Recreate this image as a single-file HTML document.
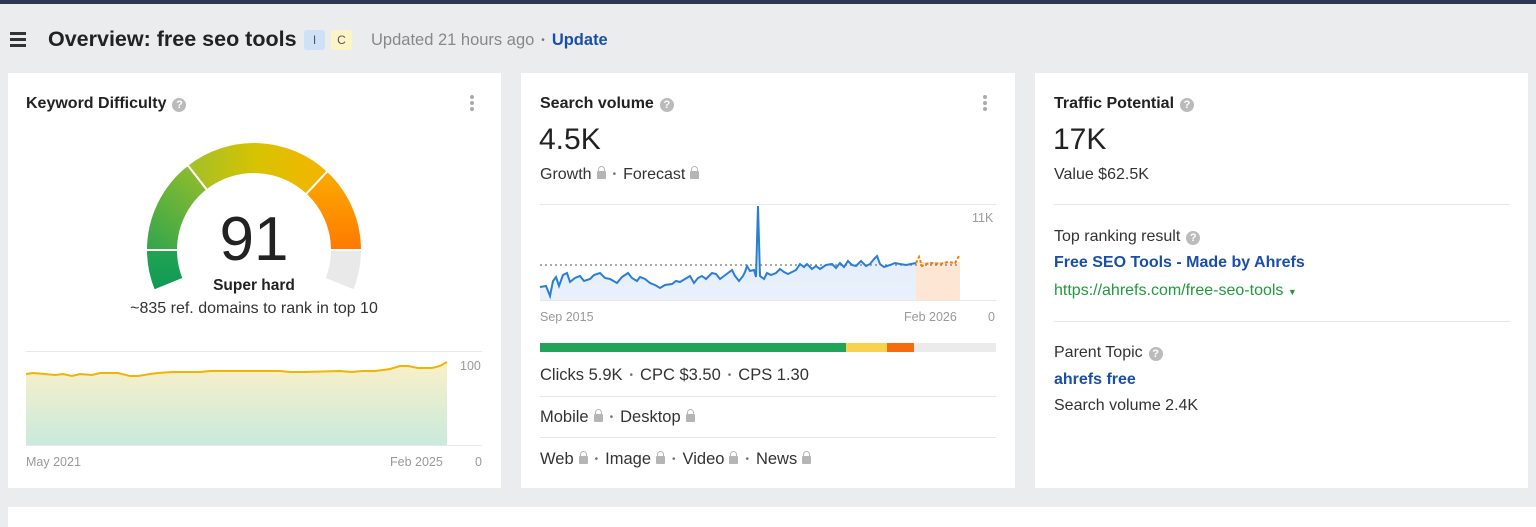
<!DOCTYPE html>
<html><head><meta charset="utf-8"><style>
*{margin:0;padding:0;box-sizing:border-box}
body{width:1536px;height:518px;overflow:hidden;background:#ebecee;font-family:"Liberation Sans",Arial,sans-serif;color:#333;position:relative}
.a{position:absolute;white-space:nowrap;line-height:1.2}
.card{position:absolute;background:#fff}
.t{font-weight:bold;font-size:16px;color:#222}
.q{display:inline-block;width:14px;height:14px;border-radius:50%;background:#bbb;color:#fff;font-size:11px;text-align:center;line-height:14px;font-weight:bold;vertical-align:0px;margin-left:6px}
.lk{display:inline-block;width:9px;height:8px;background:#b5b5b5;border-radius:1px;position:relative;margin-left:5px;vertical-align:0}
.lk:before{content:"";position:absolute;left:1px;top:-5px;width:7px;height:7px;border:1.6px solid #b5b5b5;border-radius:4px 4px 0 0;box-sizing:border-box;border-bottom:none}
.dot{color:#777;margin:0 7px;font-size:10px;vertical-align:2px}
.hl{position:absolute;height:1px;background:#e6e6e6}
.g{color:#999;font-size:12.5px}
.dots{position:absolute;width:4px}
.dots i{display:block;width:4px;height:4px;border-radius:50%;background:#aaa;margin-bottom:2px}
</style></head><body>
<div style="position:absolute;left:0;top:0;width:1536px;height:4px;background:#2c3850"></div>
<div style="position:absolute;left:10px;top:32px;width:16px">
<div style="height:2.5px;background:#333;margin-bottom:3.5px"></div><div style="height:2.5px;background:#333;margin-bottom:3.5px"></div><div style="height:2.5px;background:#333"></div></div>
<div class="a" style="left:48px;top:27px;font-size:21.5px;font-weight:bold;color:#222">Overview: free seo tools</div>
<div class="a" style="left:304px;top:30px;width:21px;height:20px;background:#cfe1f6;border-radius:3px;font-size:12px;text-align:center;line-height:20px;color:#555">I</div>
<div class="a" style="left:331px;top:30px;width:21px;height:20px;background:#fcf3c6;border-radius:3px;font-size:12px;text-align:center;line-height:20px;color:#555">C</div>
<div class="a" style="left:371px;top:31px;font-size:16.5px;color:#888">Updated 21 hours ago<span class="dot">•</span><b style="color:#1a4fa8">Update</b></div>

<!-- card 1 -->
<div class="card" style="left:8px;top:73px;width:493px;height:415px"></div>
<div class="a t" style="left:26px;top:94px">Keyword Difficulty<span class="q">?</span></div>
<div class="dots" style="left:470px;top:95px"><i></i><i></i><i></i></div>
<svg class="a" style="left:0;top:0" width="510" height="500">
<defs>
<linearGradient id="g1" x1="0" y1="1" x2="0" y2="0"><stop offset="0" stop-color="#0e9a55"/><stop offset="1" stop-color="#22a352"/></linearGradient>
<linearGradient id="g2" x1="0" y1="1" x2="0.6" y2="0"><stop offset="0" stop-color="#2fa54e"/><stop offset="1" stop-color="#8abb2e"/></linearGradient>
<linearGradient id="g3" x1="0" y1="0" x2="1" y2="0"><stop offset="0" stop-color="#a0c02a"/><stop offset="0.5" stop-color="#d8c300"/><stop offset="1" stop-color="#f6b300"/></linearGradient>
<linearGradient id="g4" x1="0" y1="0" x2="0" y2="1"><stop offset="0" stop-color="#fbaa00"/><stop offset="1" stop-color="#ff7a00"/></linearGradient>
<linearGradient id="kd" x1="0" y1="0" x2="0" y2="1"><stop offset="0" stop-color="#fbf0c8"/><stop offset="1" stop-color="#c8eadc"/></linearGradient>
<linearGradient id="sv" x1="0" y1="0" x2="0" y2="1"><stop offset="0" stop-color="#dce9f8"/><stop offset="1" stop-color="#eaf1fb"/></linearGradient>
</defs>
<g stroke="#fff" stroke-width="2">
<path d="M154,290.5 A108 108 0 0 1 146,250 L178,250 A76 76 0 0 0 183.5,278.5 Z" fill="url(#g1)"/>
<path d="M146,250 A108 108 0 0 1 187.5,164.9 L207.2,190.1 A76 76 0 0 0 178,250 Z" fill="url(#g2)"/>
<path d="M187.5,164.9 A108 108 0 0 1 327.7,171 L305.8,194.4 A76 76 0 0 0 207.2,190.1 Z" fill="url(#g3)"/>
<path d="M327.7,171 A108 108 0 0 1 362,250 L330,250 A76 76 0 0 0 305.8,194.4 Z" fill="url(#g4)"/>
<path d="M362,250 A108 108 0 0 1 354.1,290.5 L324.5,278.5 A76 76 0 0 0 330,250 Z" fill="#e9e9e9"/>
</g>
<line x1="26" y1="351.5" x2="482" y2="351.5" stroke="#e8e8e8"/>
<line x1="26" y1="445.5" x2="482" y2="445.5" stroke="#e8e8e8"/>
<path d="M26,374 L33,373 L45,374 L55,375 L63,374 L72,376 L80,374 L92,375 L100,373 L118,373 L130,376 L138,376 L150,374 L158,373 L172,372 L200,372 L210,371 L235,371 L280,371 L290,372 L305,372 L340,371 L352,372 L362,371 L375,371 L390,369 L400,366 L408,366 L418,368 L432,368 L440,366 L447,362 L447,445 L26,445 Z" fill="url(#kd)"/>
<path d="M26,374 L33,373 L45,374 L55,375 L63,374 L72,376 L80,374 L92,375 L100,373 L118,373 L130,376 L138,376 L150,374 L158,373 L172,372 L200,372 L210,371 L235,371 L280,371 L290,372 L305,372 L340,371 L352,372 L362,371 L375,371 L390,369 L400,366 L408,366 L418,368 L432,368 L440,366 L447,362" fill="none" stroke="#f2b400" stroke-width="2"/>
</svg>
<div class="a" style="left:0;width:508px;text-align:center;top:203px;font-size:62px;color:#222">91</div>
<div class="a" style="left:0;width:508px;text-align:center;top:277px;font-size:15.5px;font-weight:bold;color:#222">Super hard</div>
<div class="a" style="left:0;width:508px;text-align:center;top:299px;font-size:16px;color:#333">~835 ref. domains to rank in top 10</div>
<div class="a g" style="left:460px;top:359px">100</div>
<div class="a g" style="left:26px;top:455px">May 2021</div>
<div class="a g" style="left:390px;top:455px">Feb 2025</div>
<div class="a g" style="left:475px;top:455px">0</div>

<!-- card 2 -->
<div class="card" style="left:521px;top:73px;width:494px;height:415px"></div>
<div class="a t" style="left:540px;top:94px">Search volume<span class="q">?</span></div>
<div class="dots" style="left:983px;top:95px"><i></i><i></i><i></i></div>
<div class="a" style="left:539px;top:122px;font-size:30px;color:#222">4.5K</div>
<div class="a" style="left:540px;top:165px;font-size:16px">Growth<span class="lk"></span><span class="dot">•</span>Forecast<span class="lk"></span></div>
<svg class="a" style="left:0;top:0" width="1020" height="500">
<line x1="540" y1="204.5" x2="996" y2="204.5" stroke="#e8e8e8"/>
<line x1="540" y1="300.5" x2="996" y2="300.5" stroke="#e8e8e8"/>
<rect x="916" y="262" width="44" height="38" fill="#fde6d4"/>
<path d="M540,287 L546,286 L550,296 L553,281 L556,277 L559,286 L563,275 L567,273 L570,282 L575,278 L580,276 L584,281 L590,279 L594,275 L600,273 L605,278 L610,279 L617,283 L622,277 L628,273 L632,278 L637,281 L640,277 L645,279 L650,283 L655,285 L660,288 L665,285 L672,284 L676,281 L680,282 L685,279 L690,276 L694,283 L698,278 L702,276 L706,279 L712,273 L716,274 L720,279 L724,276 L728,273 L732,270 L735,276 L739,281 L743,276 L745,272 L747,266 L750,271 L754,270 L756,277 L758,206 L760,276 L764,279 L767,273 L771,275 L776,273 L780,269 L784,272 L788,274 L792,272 L796,270 L800,264 L804,267 L807,264 L812,269 L816,266 L820,269 L826,265 L832,264 L836,268 L840,263 L844,267 L848,261 L852,265 L856,266 L861,261 L866,266 L870,264 L874,259 L877,256 L880,264 L884,267 L890,265 L895,263 L900,264 L906,265 L911,264 L916,263 L916,300 L540,300 Z" fill="url(#sv)"/>
<line x1="540" y1="265" x2="960" y2="265" stroke="#777" stroke-width="1.2" stroke-dasharray="2,3"/>
<path d="M540,287 L546,286 L550,296 L553,281 L556,277 L559,286 L563,275 L567,273 L570,282 L575,278 L580,276 L584,281 L590,279 L594,275 L600,273 L605,278 L610,279 L617,283 L622,277 L628,273 L632,278 L637,281 L640,277 L645,279 L650,283 L655,285 L660,288 L665,285 L672,284 L676,281 L680,282 L685,279 L690,276 L694,283 L698,278 L702,276 L706,279 L712,273 L716,274 L720,279 L724,276 L728,273 L732,270 L735,276 L739,281 L743,276 L745,272 L747,266 L750,271 L754,270 L756,277 L758,206 L760,276 L764,279 L767,273 L771,275 L776,273 L780,269 L784,272 L788,274 L792,272 L796,270 L800,264 L804,267 L807,264 L812,269 L816,266 L820,269 L826,265 L832,264 L836,268 L840,263 L844,267 L848,261 L852,265 L856,266 L861,261 L866,266 L870,264 L874,259 L877,256 L880,264 L884,267 L890,265 L895,263 L900,264 L906,265 L911,264 L916,263" fill="none" stroke="#2a7fd4" stroke-width="2"/>
<path d="M916,263 L919,257 L922,266 L926,264 L932,263 L940,264 L948,262 L955,263 L959,256" fill="none" stroke="#f57c00" stroke-width="2" stroke-dasharray="3,2"/>
<rect x="540" y="343" width="306" height="9" fill="#20a558"/>
<rect x="846" y="343" width="41" height="9" fill="#f8d14e"/>
<rect x="887" y="343" width="27" height="9" fill="#f86a0e"/>
<rect x="914" y="343" width="82" height="9" fill="#ebebeb"/>
</svg>
<div class="a g" style="left:972px;top:211px">11K</div>
<div class="a g" style="left:540px;top:310px">Sep 2015</div>
<div class="a g" style="left:904px;top:310px">Feb 2026</div>
<div class="a g" style="left:988px;top:310px">0</div>
<div class="a" style="left:540px;top:366px;font-size:16.5px">Clicks 5.9K<span class="dot">•</span>CPC $3.50<span class="dot">•</span>CPS 1.30</div>
<div class="hl" style="left:540px;top:396px;width:456px"></div>
<div class="a" style="left:540px;top:408px;font-size:16.5px">Mobile<span class="lk"></span><span class="dot">•</span>Desktop<span class="lk"></span></div>
<div class="hl" style="left:540px;top:437px;width:456px"></div>
<div class="a" style="left:540px;top:450px;font-size:16.5px">Web<span class="lk"></span><span class="dot">•</span>Image<span class="lk"></span><span class="dot">•</span>Video<span class="lk"></span><span class="dot">•</span>News<span class="lk"></span></div>

<!-- card 3 -->
<div class="card" style="left:1035px;top:73px;width:493px;height:415px"></div>
<div class="a t" style="left:1054px;top:94px">Traffic Potential<span class="q">?</span></div>
<div class="a" style="left:1053px;top:122px;font-size:30px;color:#222">17K</div>
<div class="a" style="left:1054px;top:165px;font-size:16px">Value $62.5K</div>
<div class="hl" style="left:1054px;top:204px;width:456px"></div>
<div class="a" style="left:1054px;top:227px;font-size:16px">Top ranking result<span class="q">?</span></div>
<div class="a" style="left:1054px;top:253px;font-size:16px;font-weight:bold;color:#1a4fa8">Free SEO Tools - Made by Ahrefs</div>
<div class="a" style="left:1054px;top:281px;font-size:16px;color:#1f9a3c">https://ahrefs.com/free-seo-tools <span style="font-size:9px">▼</span></div>
<div class="hl" style="left:1054px;top:321px;width:456px"></div>
<div class="a" style="left:1054px;top:343px;font-size:16px">Parent Topic<span class="q">?</span></div>
<div class="a" style="left:1054px;top:370px;font-size:16px;font-weight:bold;color:#1a4fa8">ahrefs free</div>
<div class="a" style="left:1054px;top:396px;font-size:16px">Search volume 2.4K</div>

<div class="card" style="left:8px;top:507px;width:1528px;height:20px"></div>
</body></html>
